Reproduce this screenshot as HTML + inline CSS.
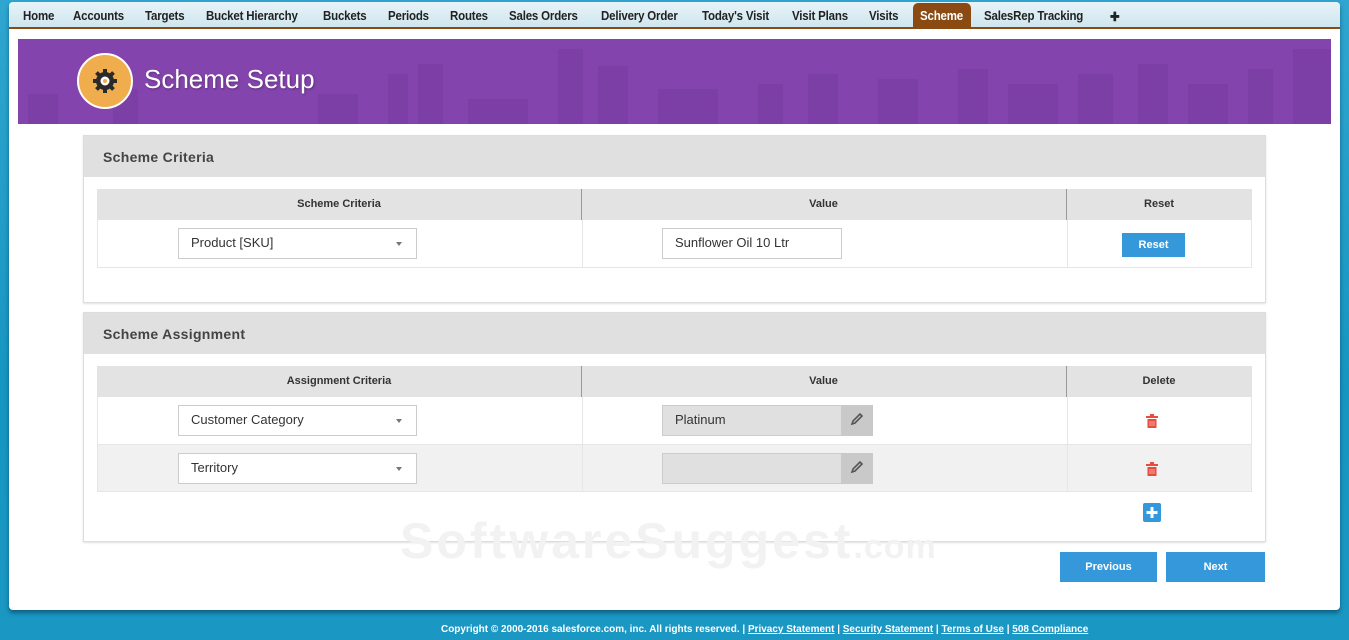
<!DOCTYPE html><html><head><style>
*{margin:0;padding:0;box-sizing:border-box}
body{width:1349px;height:640px;background:linear-gradient(#2fa6cf,#1796c2 60%,#1a98c3);font-family:"Liberation Sans",Arial,sans-serif;position:relative;overflow:hidden}
.a{position:absolute}
#main{left:9px;top:2px;width:1331px;height:608px;background:#fff;border-radius:4px;box-shadow:0 3px 4px rgba(0,40,70,.5)}
#tabs{left:9px;top:2px;width:1331px;height:27px;background:linear-gradient(#e8f3f8,#cfe6ef);border-bottom:2px solid #8a4a12;border-radius:4px 4px 0 0}
.t{position:absolute;top:9px;font-size:12.5px;color:#222;letter-spacing:-.2px;font-weight:bold;transform:scaleX(.92);transform-origin:left}
#sel{left:913px;top:3px;width:58px;height:24px;background:#8a4a12;border-radius:5px 5px 0 0}
#ban{left:18px;top:39px;width:1313px;height:85px;background:#8444ad;overflow:hidden}
.b{position:absolute;bottom:0;background:#7c3fa6}
.pan{position:absolute;left:83px;width:1183px;border:1px solid #ddd;background:#fff;box-shadow:0 1px 2px rgba(0,0,0,.12)}
.ph{height:41px;background:#e0e0e0;padding:13px 19px;font-size:14px;font-weight:bold;color:#444;letter-spacing:.3px}
.th{position:absolute;left:97px;width:1155px;height:31px;background:#e3e3e3;font-size:11px;font-weight:bold;color:#333}
.th div{position:absolute;top:0;height:100%;text-align:center;line-height:31px}
.tr{position:absolute;left:97px;width:1155px;height:48px;border:1px solid #e6e6e6;border-top:none}
.sep{position:absolute;top:0;width:1px;height:100%;background:#ccc}
.inp{position:absolute;height:31px;border:1px solid #ccc;background:#fff;font-size:13px;color:#333;padding:6px 12px}
.dd::after{content:"";position:absolute;right:14px;top:13px;border:3px solid transparent;border-top:4px solid #777}
.pen{position:absolute;right:-1px;top:-1px;width:32px;height:31px;background:#c9c9c9}
.btn{position:absolute;background:#3498db;color:#fff;font-size:11px;font-weight:bold;text-align:center}
.fl{color:#fff;text-decoration:underline}
</style></head><body>
<div class="a" id="main"></div>
<div class="a" id="tabs"></div>
<div class="a" id="sel"></div>
<span class="t" style="left:23px">Home</span>
<span class="t" style="left:73px">Accounts</span>
<span class="t" style="left:145px">Targets</span>
<span class="t" style="left:206px">Bucket Hierarchy</span>
<span class="t" style="left:323px">Buckets</span>
<span class="t" style="left:388px">Periods</span>
<span class="t" style="left:450px">Routes</span>
<span class="t" style="left:509px">Sales Orders</span>
<span class="t" style="left:601px">Delivery Order</span>
<span class="t" style="left:702px">Today's Visit</span>
<span class="t" style="left:792px">Visit Plans</span>
<span class="t" style="left:869px">Visits</span>
<span class="t" style="left:920px;color:#fff">Scheme</span>
<span class="t" style="left:984px">SalesRep Tracking</span>
<span class="t" style="left:1110px">✚</span>
<div class="a" id="ban">
<div class="b" style="left:10px;width:30px;height:30px"></div><div class="b" style="left:95px;width:25px;height:35px"></div><div class="b" style="left:300px;width:40px;height:30px"></div><div class="b" style="left:370px;width:20px;height:50px"></div><div class="b" style="left:400px;width:25px;height:60px"></div><div class="b" style="left:450px;width:60px;height:25px"></div><div class="b" style="left:540px;width:25px;height:75px"></div><div class="b" style="left:580px;width:30px;height:58px"></div><div class="b" style="left:640px;width:60px;height:35px"></div><div class="b" style="left:740px;width:25px;height:40px"></div><div class="b" style="left:790px;width:30px;height:50px"></div><div class="b" style="left:860px;width:40px;height:45px"></div><div class="b" style="left:940px;width:30px;height:55px"></div><div class="b" style="left:990px;width:50px;height:40px"></div><div class="b" style="left:1060px;width:35px;height:50px"></div><div class="b" style="left:1120px;width:30px;height:60px"></div><div class="b" style="left:1170px;width:40px;height:40px"></div><div class="b" style="left:1230px;width:25px;height:55px"></div><div class="b" style="left:1275px;width:38px;height:75px"></div>
</div>
<div class="a" style="left:77px;top:53px;width:56px;height:56px;border-radius:50%;background:#f0ad4e;border:2px solid #fff"></div>
<svg class="a" style="left:91px;top:67px" width="28" height="28" viewBox="0 0 28 28"><g fill="#2a2a2a"><circle cx="14" cy="14" r="9"/><g stroke="#2a2a2a" stroke-width="4"><line x1="14" y1="2" x2="14" y2="26"/><line x1="2" y1="14" x2="26" y2="14"/><line x1="5.5" y1="5.5" x2="22.5" y2="22.5"/><line x1="22.5" y1="5.5" x2="5.5" y2="22.5"/></g></g><circle cx="14" cy="14" r="4.5" fill="#fff"/><circle cx="14" cy="14" r="2" fill="#f0ad4e"/></svg>
<div class="a" style="left:144px;top:64px;font-size:26px;color:#fff;text-shadow:1px 1px 2px rgba(0,0,0,.3)">Scheme Setup</div>

<div class="pan" style="top:135px;height:168px"><div class="ph">Scheme Criteria</div></div>
<div class="th" style="top:189px"><div style="left:0;width:484px">Scheme Criteria</div><div style="left:484px;width:485px">Value</div><div style="left:969px;width:186px">Reset</div><span class="sep" style="left:484px;background:#999"></span><span class="sep" style="left:969px;background:#999"></span></div>
<div class="tr" style="top:220px"><span class="sep" style="left:484px;background:#e6e6e6"></span><span class="sep" style="left:969px;background:#e6e6e6"></span></div>
<div class="inp dd" style="left:178px;top:228px;width:239px">Product [SKU]</div>
<div class="inp" style="left:662px;top:228px;width:180px">Sunflower Oil 10 Ltr</div>
<div class="btn" style="left:1122px;top:233px;width:63px;height:24px;line-height:24px">Reset</div>

<div class="pan" style="top:312px;height:230px"><div class="ph">Scheme Assignment</div></div>
<div class="th" style="top:366px"><div style="left:0;width:484px">Assignment Criteria</div><div style="left:484px;width:485px">Value</div><div style="left:969px;width:186px">Delete</div><span class="sep" style="left:484px;background:#999"></span><span class="sep" style="left:969px;background:#999"></span></div>
<div class="tr" style="top:397px"><span class="sep" style="left:484px;background:#e6e6e6"></span><span class="sep" style="left:969px;background:#e6e6e6"></span></div>
<div class="tr" style="top:445px;height:47px;background:#f1f1f1"><span class="sep" style="left:484px;background:#e6e6e6"></span><span class="sep" style="left:969px;background:#e6e6e6"></span></div>
<div class="inp dd" style="left:178px;top:405px;width:239px">Customer Category</div>
<div class="inp" style="left:662px;top:405px;width:211px;background:#e0e0e0">Platinum<div class="pen"></div></div>
<div class="inp dd" style="left:178px;top:453px;width:239px">Territory</div>
<div class="inp" style="left:662px;top:453px;width:211px;background:#e0e0e0"><div class="pen"></div></div>
<svg class="a" style="left:850px;top:412px" width="14" height="14" viewBox="0 0 14 14"><path d="M2 12 L3 9 L10 2 L12 4 L5 11 Z" fill="none" stroke="#555" stroke-width="1.6"/></svg>
<svg class="a" style="left:850px;top:460px" width="14" height="14" viewBox="0 0 14 14"><path d="M2 12 L3 9 L10 2 L12 4 L5 11 Z" fill="none" stroke="#555" stroke-width="1.6"/></svg>
<svg class="a" style="left:1146px;top:414px" width="12" height="14" viewBox="0 0 12 14"><rect x="0" y="2" width="12" height="2" fill="#e74c3c"/><rect x="4" y="0" width="4" height="2" fill="#e74c3c"/><rect x="1.5" y="5" width="9" height="9" fill="#e74c3c"/><path d="M4 7v5M6 7v5M8 7v5" stroke="#f7c0b8" stroke-width=".8"/></svg>
<svg class="a" style="left:1146px;top:462px" width="12" height="14" viewBox="0 0 12 14"><rect x="0" y="2" width="12" height="2" fill="#e74c3c"/><rect x="4" y="0" width="4" height="2" fill="#e74c3c"/><rect x="1.5" y="5" width="9" height="9" fill="#e74c3c"/><path d="M4 7v5M6 7v5M8 7v5" stroke="#f7c0b8" stroke-width=".8"/></svg>
<svg class="a" style="left:1143px;top:503px" width="18" height="19" viewBox="0 0 18 19"><rect width="18" height="19" rx="2" fill="#3498db"/><path d="M9 4v11M3.5 9.5h11" stroke="#fff" stroke-width="3"/></svg>
<div class="a" style="left:400px;top:512px;font-size:50px;font-weight:bold;color:#f2f2f2;letter-spacing:3px">SoftwareSuggest<span style="font-size:34px;letter-spacing:1px">.com</span></div>
<div class="btn" style="left:1060px;top:552px;width:97px;height:30px;line-height:30px">Previous</div>
<div class="btn" style="left:1166px;top:552px;width:99px;height:30px;line-height:30px">Next</div>
<div class="a" style="left:441px;top:623px;white-space:nowrap;font-size:10.5px;font-weight:bold;color:#fff;transform:scaleX(.95);transform-origin:left">Copyright © 2000-2016 salesforce.com, inc. All rights reserved. | <span class="fl">Privacy Statement</span> | <span class="fl">Security Statement</span> | <span class="fl">Terms of Use</span> | <span class="fl">508 Compliance</span></div>
</body></html>
